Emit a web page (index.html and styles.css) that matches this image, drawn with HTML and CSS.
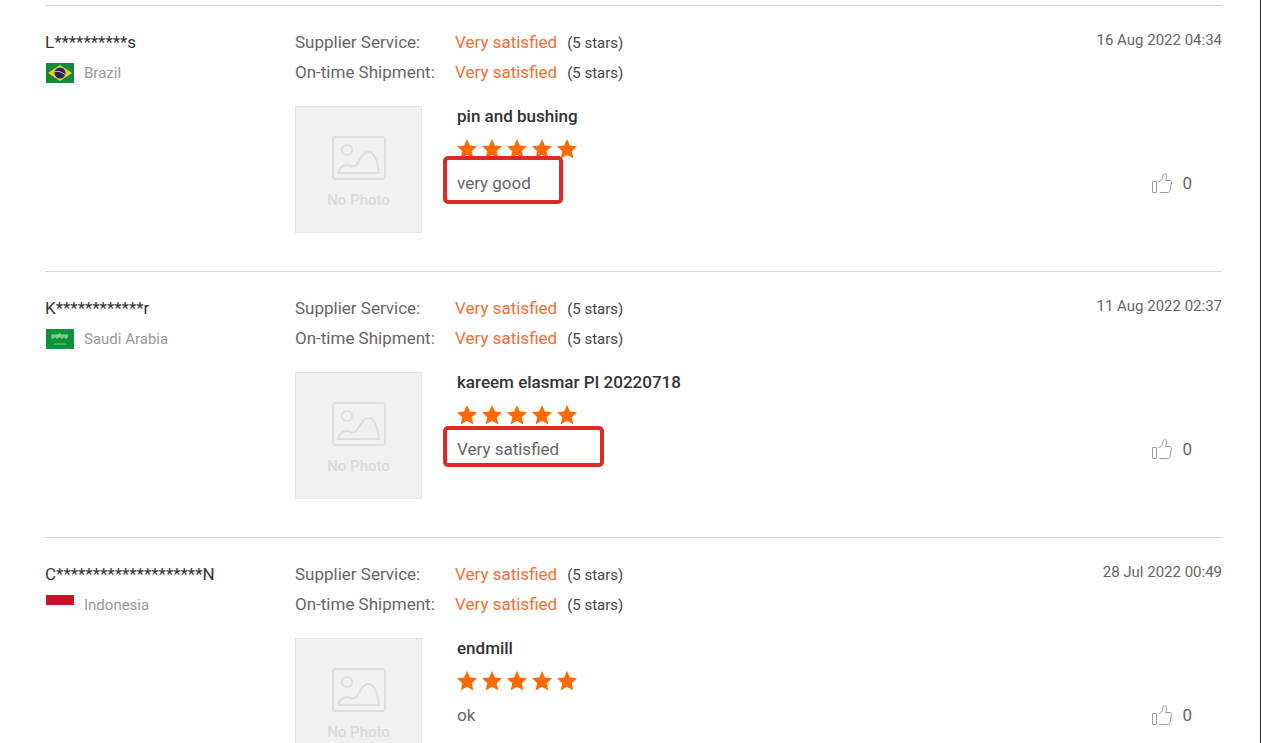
FILE: index.html
```html
<!DOCTYPE html>
<html lang="en">

<head>
    <meta charset="UTF-8">
    <meta name="viewport" content="width=device-width, initial-scale=1.0">
    <title>Reviews</title>
    <link rel="stylesheet" href="styles.css">
</head>

<body>
    <!-- shared icons -->
    <svg class="sprite" aria-hidden="true">
        <symbol id="stars" viewBox="0 0 120 20">
            <g id="star-row">
                <path id="star" d="M10 0l2.900 6.500 7.100.8-5.300 4.900 1.700 7.300L10 15.800l-6.400 3.700 1.700-7.300L0 7.300l7.100-.8z"/>
                <use href="#star" x="25"/>
                <use href="#star" x="50"/>
                <use href="#star" x="75"/>
                <use href="#star" x="100"/>
            </g>
        </symbol>
        <symbol id="picture" viewBox="0 0 54 44">
            <g fill="none" stroke="#dedede" stroke-width="2">
                <rect x="1" y="1" width="52" height="42" rx="3"/>
                <circle cx="15" cy="14" r="5"/>
                <path d="M6 37c2-6 6-8 9-8 4 0 5 3 8 1 5-3 6-14 13-14 7 0 10 12 11 21z"/>
            </g>
        </symbol>
        <symbol id="thumb" viewBox="0 0 20 20">
            <g fill="none" stroke="#999" stroke-width="1">
                <rect x=".5" y="8.500" width="4" height="11" rx=".5"/>
                <path d="M6.500 8.500c3 0 4-2.500 4.500-6C11.200 1 11.800.5 12.800.5c1.200 0 1.700 1 1.700 2.200 0 2-.5 3.800-.8 4.800h4.300c1.200 0 1.700.8 1.500 1.800l-1.500 8.200c-.3 1.200-1 2-2.500 2h-8"/>
            </g>
        </symbol>
    </svg>

    <main class="reviews">
        <article class="review">
            <div class="buyer">
                <div class="name">L**********s</div>
                <div class="country">
                    <svg class="flag" viewBox="0 0 28 20">
                        <rect width="28" height="20" fill="#15893a"/>
                        <path d="M14 2l12 8-12 8L2 10z" fill="#e8d02c"/>
                        <circle cx="14" cy="10" r="5.500" fill="#2b2560"/>
                        <path d="M9 8.500c4-.5 7 .5 10 3" fill="none" stroke="#b9b5d6"/>
                    </svg>
                    <span>Brazil</span>
                </div>
            </div>
            <div class="content">
                <dl class="scores">
                    <dt>Supplier Service:</dt>
                    <dd>Very satisfied <small>(5 stars)</small></dd>
                    <dt>On-time Shipment:</dt>
                    <dd>Very satisfied <small>(5 stars)</small></dd>
                </dl>
                <div class="product">
                    <div class="photo">
                        <svg><use href="#picture"/></svg>
                        <span>No Photo</span>
                    </div>
                    <div class="details">
                        <h2>pin and bushing</h2>
                        <svg class="stars" role="img" aria-label="5 stars"><use href="#stars"/></svg>
                        <p class="comment">very good<span class="mark mark-tall"></span></p>
                    </div>
                </div>
            </div>
            <div class="side">
                <time>16 Aug 2022 04:34</time>
                <button class="like" type="button" aria-label="Helpful"><svg><use href="#thumb"/></svg>0</button>
            </div>
        </article>

        <article class="review">
            <div class="buyer">
                <div class="name">K************r</div>
                <div class="country">
                    <svg class="flag" viewBox="0 0 28 20">
                        <rect width="28" height="20" fill="#0a9436"/>
                        <path d="M6 5v4h2V5m2 0v4h2V5m1 4V5h2v4h2V5m2 0v4h2V5M6 7h16" fill="none" stroke="#a5dcb0"/>
                        <path d="M8 15h12" stroke="#72c587"/>
                    </svg>
                    <span>Saudi Arabia</span>
                </div>
            </div>
            <div class="content">
                <dl class="scores">
                    <dt>Supplier Service:</dt>
                    <dd>Very satisfied <small>(5 stars)</small></dd>
                    <dt>On-time Shipment:</dt>
                    <dd>Very satisfied <small>(5 stars)</small></dd>
                </dl>
                <div class="product">
                    <div class="photo">
                        <svg><use href="#picture"/></svg>
                        <span>No Photo</span>
                    </div>
                    <div class="details">
                        <h2>kareem elasmar PI 20220718</h2>
                        <svg class="stars" role="img" aria-label="5 stars"><use href="#stars"/></svg>
                        <p class="comment">Very satisfied<span class="mark mark-wide"></span></p>
                    </div>
                </div>
            </div>
            <div class="side">
                <time>11 Aug 2022 02:37</time>
                <button class="like" type="button" aria-label="Helpful"><svg><use href="#thumb"/></svg>0</button>
            </div>
        </article>

        <article class="review">
            <div class="buyer">
                <div class="name">C********************N</div>
                <div class="country">
                    <svg class="flag" viewBox="0 0 28 20">
                        <rect width="28" height="20" fill="#fff"/>
                        <rect width="28" height="10" fill="#cb1029"/>
                    </svg>
                    <span>Indonesia</span>
                </div>
            </div>
            <div class="content">
                <dl class="scores">
                    <dt>Supplier Service:</dt>
                    <dd>Very satisfied <small>(5 stars)</small></dd>
                    <dt>On-time Shipment:</dt>
                    <dd>Very satisfied <small>(5 stars)</small></dd>
                </dl>
                <div class="product">
                    <div class="photo">
                        <svg><use href="#picture"/></svg>
                        <span>No Photo</span>
                    </div>
                    <div class="details">
                        <h2>endmill</h2>
                        <svg class="stars" role="img" aria-label="5 stars"><use href="#stars"/></svg>
                        <p class="comment">ok</p>
                    </div>
                </div>
            </div>
            <div class="side">
                <time>28 Jul 2022 00:49</time>
                <button class="like" type="button" aria-label="Helpful"><svg><use href="#thumb"/></svg>0</button>
            </div>
        </article>
    </main>
</body>

</html>
```
FILE: styles.css
```css
* {
    box-sizing: border-box;
}

body {
    margin: 0;
    height: 100vh;
    overflow: hidden;
    background-color: #fefefe;
    border-right: 1px solid #222;
    font-family: Roboto, "Liberation Sans", sans-serif;
    font-size: 17px;
    line-height: 30px;
    color: #333;
}

.sprite {
    display: none;
}

.reviews {
    padding: 5px 38px 0 45px;
}

.review {
    display: grid;
    grid-template-columns: 250px 1fr auto;
    padding: 21px 0 38px;
    border-top: 1px solid #d6d6d6;
}

.country {
    display: flex;
    align-items: center;
    gap: 10px;
    padding: 1px 0 0 1px;
    font-size: 15px;
    color: #999;
}

.flag {
    width: 28px;
    height: 20px;
}

.scores {
    display: grid;
    grid-template-columns: 160px 1fr;
    margin: 0 0 19px;
}

.scores dt {
    color: #666;
}

.scores dd {
    display: flex;
    gap: 10px;
    margin: 0;
    color: #f07033;
}

.scores small {
    font-size: 15px;
    line-height: 32px;
    height: 30px;
    color: #444;
}

.product {
    display: flex;
    gap: 35px;
}

.photo {
    display: flex;
    flex-direction: column;
    align-items: center;
    width: 127px;
    height: 127px;
    padding-top: 29px;
    background-color: #f1f1f1;
    border: 1px solid #e6e6e6;
    font-size: 15px;
    font-weight: 500;
    color: #dadada;
}

.photo svg {
    width: 54px;
    height: 44px;
    margin-bottom: 5px;
}

.details h2 {
    margin: 0 0 13px;
    font-size: 17px;
    font-weight: 500;
    line-height: 20px;
}

.stars {
    display: block;
    width: 120px;
    height: 20px;
    margin-bottom: 9px;
    fill: #ff6a00;
}

.comment {
    position: relative;
    margin: 0;
    color: #666;
}

/* red frame drawn over the comment */
.mark {
    position: absolute;
    left: -14px;
    border: 4px solid #dc2a24;
    border-radius: 5px;
}

.mark-tall {
    top: -12px;
    width: 120px;
    height: 48px;
}

.mark-wide {
    top: -8px;
    width: 161px;
    height: 41px;
}

.side {
    display: flex;
    flex-direction: column;
    align-items: flex-end;
    gap: 115px;
}

.side time {
    font-size: 15px;
    line-height: 26px;
    color: #666;
}

.like {
    display: flex;
    align-items: center;
    gap: 10px;
    margin-right: 30px;
    padding: 0;
    border: 0;
    background: none;
    font: inherit;
    color: #666;
    cursor: pointer;
}

.like svg {
    width: 20px;
    height: 20px;
}
```
